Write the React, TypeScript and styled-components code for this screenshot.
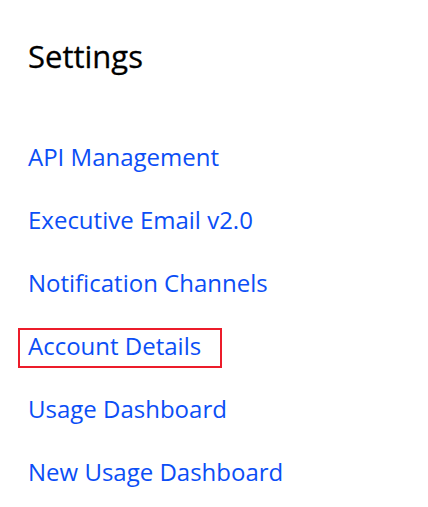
import styled, { createGlobalStyle } from 'styled-components';

const GlobalStyle = createGlobalStyle`
  body {
    margin: 0;
    background: #ffffff;
    font-family: 'Open Sans', 'Noto Sans', sans-serif;
  }
`;

const links = [
  { label: 'API Management' },
  { label: 'Executive Email v2.0' },
  { label: 'Notification Channels' },
  { label: 'Account Details', highlighted: true },
  { label: 'Usage Dashboard' },
  { label: 'New Usage Dashboard' },
];

export default function App() {
  return (
    <>
      <GlobalStyle />
      <Page>
        <Title>Settings</Title>
        <LinkList>
          {links.map((link) => (
            <li key={link.label}>
              <NavLink href="#" $highlighted={link.highlighted}>
                {link.label}
              </NavLink>
            </li>
          ))}
        </LinkList>
      </Page>
    </>
  );
}

const Page = styled.div`
  padding: 36px 28px 20px;
`;

const Title = styled.h2`
  margin: 0;
  font-size: 31px;
  line-height: 40px;
  font-weight: 500;
  color: #000;
  -webkit-text-stroke: 0.3px #000;
`;

const LinkList = styled.ul`
  list-style: none;
  margin: 65px 0 0;
  padding: 0;
  display: flex;
  flex-direction: column;
  gap: 31px;
`;

const NavLink = styled.a<{ $highlighted?: boolean }>`
  position: relative;
  display: inline-block;
  font-size: 24px;
  line-height: 32px;
  color: #0b4ef6;
  text-decoration: none;

  ${(p) =>
    p.$highlighted &&
    `
    &::after {
      content: '';
      position: absolute;
      top: -2px;
      left: -10px;
      right: -21px;
      bottom: -6px;
      border: 2px solid #ec1c2a;
      pointer-events: none;
    }
  `}
`;
